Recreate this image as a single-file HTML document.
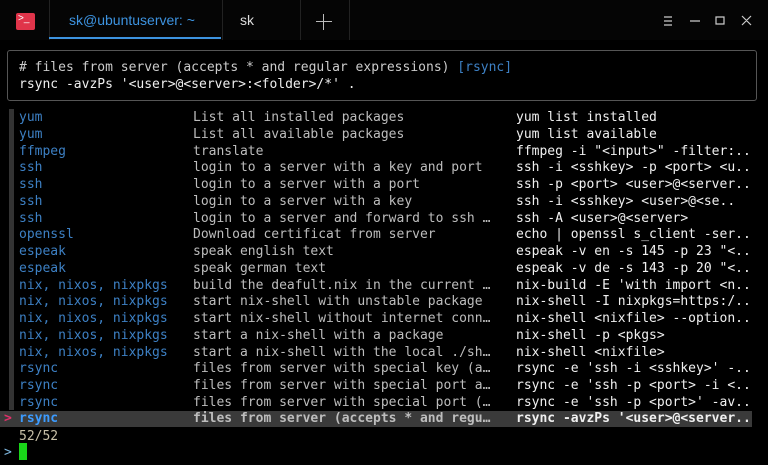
<!DOCTYPE html><html><head><meta charset="utf-8"><style>
body{margin:0;width:768px;height:465px;background:#000;overflow:hidden;font-family:"DejaVu Sans Mono","Liberation Mono",monospace;font-size:13px;position:relative}
.t{position:absolute;white-space:pre;line-height:17px}
.r{position:absolute;left:0;width:768px;height:16.75px}
.r span{position:absolute;top:0;white-space:pre;line-height:16.75px}
.a{left:19px;color:#3d80c4}.b{left:193px;color:#bdbdbd}.c{left:516px;color:#f0f0f0}
.sel{background:#3a3a3a;width:752px}
.sel span{font-weight:bold}.sel .a{color:#3c9bff}
</style></head><body>
<div style="position:absolute;left:0;top:0;width:768px;height:40px;background:#050505"></div>
<div style="position:absolute;left:16px;top:13px;width:19px;height:17px;background:#e0344a;border-radius:2px"></div>
<div class="t" style="left:18px;top:10px;color:#fff;font-size:10px;font-family:'Liberation Sans',sans-serif">&gt;_</div>
<div style="position:absolute;left:49px;top:0;width:172px;height:40px;border-left:1px solid #222;border-right:1px solid #222"></div>
<div class="t" style="left:69px;top:12px;color:#3d93e0;font-family:'Liberation Sans',sans-serif;font-size:14px">sk@ubuntuserver: ~</div>
<div style="position:absolute;left:49px;top:37px;width:172px;height:2px;background:#3d93e0"></div>
<div class="t" style="left:240px;top:12px;color:#ddd;font-family:'Liberation Sans',sans-serif;font-size:14px">sk</div>
<div style="position:absolute;left:300px;top:0;width:48px;height:40px;border-left:1px solid #222;border-right:1px solid #222"></div>
<div style="position:absolute;left:316px;top:21px;width:16px;height:1px;background:#bbb"></div>
<div style="position:absolute;left:323px;top:14px;width:1px;height:16px;background:#bbb"></div>
<svg style="position:absolute;left:660px;top:13px" width="100" height="16" stroke="#ccc" stroke-width="1.2" fill="none"><path d="M4 4h8M4 8h8M4 12h8M30 8h10M56 4h8v7h-8z M82 3l9 9M91 3l-9 9"/></svg>
<div style="position:absolute;left:7px;top:50px;width:748px;height:49px;border:1px solid #555;border-radius:3px"></div>
<div class="t" style="left:19px;top:59px;color:#ccc"># files from server (accepts * and regular expressions) <span style="color:#3d80c4">[rsync]</span></div>
<div class="t" style="left:19px;top:76px;color:#eee">rsync -avzPs '&lt;user&gt;@&lt;server&gt;:&lt;folder&gt;/*' .</div>
<div style="position:absolute;left:9px;top:109px;width:5px;height:301px;background:#333"></div>
<div style="position:absolute;left:0;top:110px">
<div class="r" style="top:0"><span class="a">yum</span><span class="b">List all installed packages</span><span class="c">yum list installed</span></div>
<div class="r" style="top:16.75px"><span class="a">yum</span><span class="b">List all available packages</span><span class="c">yum list available</span></div>
<div class="r" style="top:33.5px"><span class="a">ffmpeg</span><span class="b">translate</span><span class="c">ffmpeg -i "&lt;input&gt;" -filter:..</span></div>
<div class="r" style="top:50.25px"><span class="a">ssh</span><span class="b">login to a server with a key and port</span><span class="c">ssh -i &lt;sshkey&gt; -p &lt;port&gt; &lt;u..</span></div>
<div class="r" style="top:67px"><span class="a">ssh</span><span class="b">login to a server with a port</span><span class="c">ssh -p &lt;port&gt; &lt;user&gt;@&lt;server..</span></div>
<div class="r" style="top:83.75px"><span class="a">ssh</span><span class="b">login to a server with a key</span><span class="c">ssh -i &lt;sshkey&gt; &lt;user&gt;@&lt;se..</span></div>
<div class="r" style="top:100.5px"><span class="a">ssh</span><span class="b">login to a server and forward to ssh …</span><span class="c">ssh -A &lt;user&gt;@&lt;server&gt;</span></div>
<div class="r" style="top:117.25px"><span class="a">openssl</span><span class="b">Download certificat from server</span><span class="c">echo | openssl s_client -ser..</span></div>
<div class="r" style="top:134px"><span class="a">espeak</span><span class="b">speak english text</span><span class="c">espeak -v en -s 145 -p 23 "&lt;..</span></div>
<div class="r" style="top:150.75px"><span class="a">espeak</span><span class="b">speak german text</span><span class="c">espeak -v de -s 143 -p 20 "&lt;..</span></div>
<div class="r" style="top:167.5px"><span class="a">nix, nixos, nixpkgs</span><span class="b">build the deafult.nix in the current …</span><span class="c">nix-build -E 'with import &lt;n..</span></div>
<div class="r" style="top:184.25px"><span class="a">nix, nixos, nixpkgs</span><span class="b">start nix-shell with unstable package</span><span class="c">nix-shell -I nixpkgs=https:/..</span></div>
<div class="r" style="top:201px"><span class="a">nix, nixos, nixpkgs</span><span class="b">start nix-shell without internet conn…</span><span class="c">nix-shell &lt;nixfile&gt; --option..</span></div>
<div class="r" style="top:217.75px"><span class="a">nix, nixos, nixpkgs</span><span class="b">start a nix-shell with a package</span><span class="c">nix-shell -p &lt;pkgs&gt;</span></div>
<div class="r" style="top:234.5px"><span class="a">nix, nixos, nixpkgs</span><span class="b">start a nix-shell with the local ./sh…</span><span class="c">nix-shell &lt;nixfile&gt;</span></div>
<div class="r" style="top:251.25px"><span class="a">rsync</span><span class="b">files from server with special key (a…</span><span class="c">rsync -e 'ssh -i &lt;sshkey&gt;' -..</span></div>
<div class="r" style="top:268px"><span class="a">rsync</span><span class="b">files from server with special port a…</span><span class="c">rsync -e 'ssh -p &lt;port&gt; -i &lt;..</span></div>
<div class="r" style="top:284.75px"><span class="a">rsync</span><span class="b">files from server with special port (…</span><span class="c">rsync -e 'ssh -p &lt;port&gt;' -av..</span></div>
<div class="r sel" style="top:300.5px"><span style="left:4px;color:#e0306a">&gt;</span><span class="a">rsync</span><span class="b">files from server (accepts * and regu…</span><span class="c">rsync -avzPs '&lt;user&gt;@&lt;server..</span></div>
</div>
<div class="t" style="left:19px;top:428px;color:#c8c0a8">52/52</div>
<div class="t" style="left:4px;top:444px;color:#7fb8e0">&gt;</div>
<div style="position:absolute;left:19px;top:443px;width:8px;height:17px;background:#19d419"></div>
</body></html>
